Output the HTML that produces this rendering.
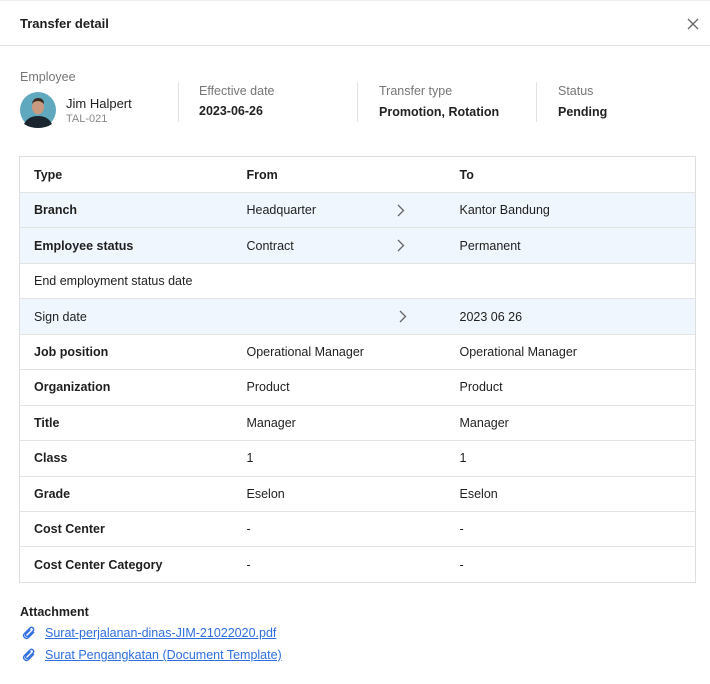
<!DOCTYPE html>
<html><head><style>
*{box-sizing:border-box;margin:0;padding:0}
body{width:710px;height:684px;background:#fff;font-family:"Liberation Sans",Arial,sans-serif;color:#1f1f1f;position:relative;overflow:hidden}
.hdr{position:absolute;left:0;top:0;width:710px;height:46px;border-bottom:1px solid #e3e3e3;border-top:1px solid #eee}
.hdr .t{position:absolute;left:20px;top:15px;font-size:13px;font-weight:bold}
.lbl{position:absolute;font-size:12.5px;color:#767676}
.val{position:absolute;font-size:12.5px;font-weight:bold;color:#222}
.sep{position:absolute;top:82px;width:1px;height:40px;background:#e3e3e3}
table{position:absolute;left:19px;top:156px;width:677px;border-collapse:collapse;border:1px solid #dedede;font-size:12.5px;table-layout:fixed}
td{height:35.45px;border-top:1px solid #e3e3e3;padding:0;vertical-align:middle;position:relative}
tr:first-child td{height:36px;border-top:none;font-weight:bold}
td.a{padding-left:14px;font-weight:bold}
tr.h td{background:#f0f6fd}
.arr{position:absolute;left:150px;top:11px}
a{color:#2f6fe0;text-decoration:underline;font-size:12.5px}
</style></head><body>
<div class="hdr"><div class="t">Transfer detail</div>
<svg style="position:absolute;left:687px;top:17px" width="12" height="12" viewBox="0 0 12 12"><path d="M1 1L11 11M11 1L1 11" stroke="#666" stroke-width="1.3"/></svg></div>
<div class="lbl" style="left:20px;top:70px">Employee</div>
<svg style="position:absolute;left:20px;top:92px" width="36" height="36" viewBox="0 0 36 36"><circle cx="18" cy="18" r="18" fill="#5fa8bd"/><path d="M4 32Q8 24 18 24Q28 24 32 32Q26 36 18 36Q10 36 4 32Z" fill="#1a2530"/><ellipse cx="18" cy="15" rx="6" ry="7.5" fill="#c99a80"/><path d="M12 12Q13 6 18 6Q24 6 24 12Q21 9 18 9Q14 9 12 12Z" fill="#3a2a20"/></svg>
<div style="position:absolute;left:66px;top:96px;font-size:13px">Jim Halpert</div>
<div style="position:absolute;left:66px;top:113px;font-size:11px;color:#888">TAL-021</div>
<div class="sep" style="left:178px"></div>
<div class="lbl" style="left:199px;top:84px">Effective date</div>
<div class="val" style="left:199px;top:104px">2023-06-26</div>
<div class="sep" style="left:357px"></div>
<div class="lbl" style="left:379px;top:84px">Transfer type</div>
<div class="val" style="left:379px;top:105px">Promotion, Rotation</div>
<div class="sep" style="left:536px"></div>
<div class="lbl" style="left:558px;top:84px">Status</div>
<div class="val" style="left:558px;top:105px">Pending</div>
<table>
<colgroup><col style="width:227px"><col style="width:213px"><col></colgroup>
<tr><td class="a">Type</td><td>From</td><td>To</td></tr>
<tr class="h"><td class="a">Branch</td><td>Headquarter<svg class="arr" width="8" height="13" viewBox="0 0 8 13"><path d="M1 1L6.5 6.5L1 12" stroke="#666" fill="none" stroke-width="1.3"/></svg></td><td>Kantor Bandung</td></tr>
<tr class="h"><td class="a">Employee status</td><td>Contract<svg class="arr" width="8" height="13" viewBox="0 0 8 13"><path d="M1 1L6.5 6.5L1 12" stroke="#666" fill="none" stroke-width="1.3"/></svg></td><td>Permanent</td></tr>
<tr><td class="a" style="font-weight:normal">End employment status date</td><td></td><td></td></tr>
<tr class="h"><td class="a" style="font-weight:normal">Sign date</td><td><svg class="arr" style="left:152px" width="8" height="13" viewBox="0 0 8 13"><path d="M1 1L6.5 6.5L1 12" stroke="#666" fill="none" stroke-width="1.3"/></svg></td><td>2023 06 26</td></tr>
<tr><td class="a">Job position</td><td>Operational Manager</td><td>Operational Manager</td></tr>
<tr><td class="a">Organization</td><td>Product</td><td>Product</td></tr>
<tr><td class="a">Title</td><td>Manager</td><td>Manager</td></tr>
<tr><td class="a">Class</td><td>1</td><td>1</td></tr>
<tr><td class="a">Grade</td><td>Eselon</td><td>Eselon</td></tr>
<tr><td class="a">Cost Center</td><td>-</td><td>-</td></tr>
<tr><td class="a">Cost Center Category</td><td>-</td><td>-</td></tr>
</table>
<div style="position:absolute;left:20px;top:605px;font-size:12.5px;font-weight:bold">Attachment</div>
<svg style="position:absolute;left:22px;top:626px" width="14" height="14" viewBox="0 0 14 14"><path d="M12 6L6.5 11.5Q4.5 13.5 2.5 11.5Q0.5 9.5 2.5 7.5L8 2Q9.5 0.5 11 2Q12.5 3.5 11 5L6 10Q5 11 4 10Q3 9 4 8L8.5 3.5" stroke="#2f6fe0" fill="none" stroke-width="1.4"/></svg>
<a style="position:absolute;left:45px;top:626px">Surat-perjalanan-dinas-JIM-21022020.pdf</a>
<svg style="position:absolute;left:22px;top:648px" width="14" height="14" viewBox="0 0 14 14"><path d="M12 6L6.5 11.5Q4.5 13.5 2.5 11.5Q0.5 9.5 2.5 7.5L8 2Q9.5 0.5 11 2Q12.5 3.5 11 5L6 10Q5 11 4 10Q3 9 4 8L8.5 3.5" stroke="#2f6fe0" fill="none" stroke-width="1.4"/></svg>
<a style="position:absolute;left:45px;top:648px">Surat Pengangkatan (Document Template)</a>
</body></html>
